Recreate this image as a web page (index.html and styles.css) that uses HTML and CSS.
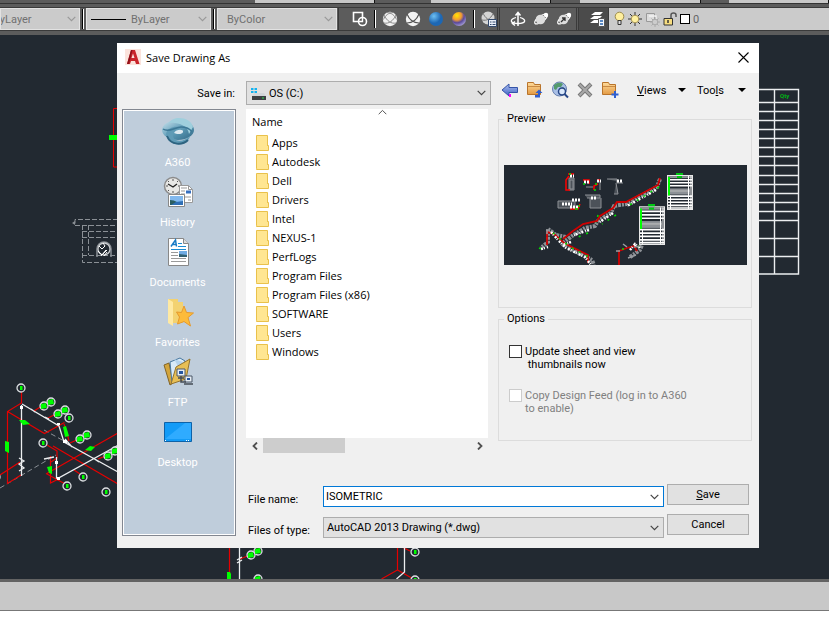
FILE: index.html
```html
<!DOCTYPE html>
<html lang="en">
<head>
    <meta charset="UTF-8">
    <meta name="viewport" content="width=device-width, initial-scale=1.0">
    <title>Save Drawing As</title>
    <link rel="stylesheet" href="styles.css">
</head>
<body>
    <!-- shared shapes -->
    <svg class="defs" width="0" height="0">
        <defs>
            <symbol id="chevron" viewBox="0 0 9 6"><path d="M.7 .8 4.5 4.6 8.3 .8" fill="none" stroke="currentColor" stroke-width="1.2"/></symbol>
            <symbol id="folder" viewBox="0 0 14 16">
                <path d="M.5 .5h11v14h-11z" fill="#ffe692" stroke="#e9c14b"/>
                <path d="M10.500 10.500h2v5h-12v-1" fill="#ffe692" stroke="#e9c14b"/>
                <path d="M1 1h10v13H1z" fill="#ffe692"/>
            </symbol>
            <symbol id="tag" viewBox="0 0 10 10"><circle cx="5" cy="5" r="4" fill="#222931" stroke="#dcdfe2" stroke-width="1.3"/><path d="M4 3h2.500v4H4z" fill="#00ff00"/></symbol>
            <symbol id="tagFull" viewBox="0 0 10 10"><circle cx="5" cy="5" r="4" fill="#222931" stroke="#dcdfe2" stroke-width="1.3"/><path d="M2 3l5-1 1 5-6 1z" fill="#00ff00"/></symbol>
            <symbol id="rows" viewBox="0 0 26 36" preserveAspectRatio="none">
                <path d="M.5 2.500h25v33h-25z" fill="none" stroke="#e8e8e8"/>
                <path d="M1 3h24v2H1z" fill="#8d9196"/>
                <path d="M3 15h20v6H3z" fill="#8d9196"/>
                <path d="M1 6.500h24M1 9.500h24M1 12.500h24M1 22.500h24M1 25.500h24M1 28.500h24M1 31.500h24M1 34h24" stroke="#fff" stroke-width="1.500"/>
                <path d="M3 17.500h20" stroke="#bbb"/>
                <path d="M3.500 22v13M21.500 3v32M24 3v32" stroke="#fff"/>
                <path d="M2 4v18" stroke="#00ff00" stroke-width="2"/>
                <path d="M9 0h7v2H9zM10 3h5v2h-5z" fill="#00c814"/>
            </symbol>
            <linearGradient id="blueGrad" x1="0" y1="0" x2="0" y2="1"><stop offset="0" stop-color="#aebff0"/><stop offset="1" stop-color="#3b62c4"/></linearGradient>
            <linearGradient id="orangeGrad" x1="0" y1="0" x2="0" y2="1"><stop offset="0" stop-color="#ffdc9c"/><stop offset="1" stop-color="#e39a44"/></linearGradient>
            <radialGradient id="ballBlue" cx=".35" cy=".3"><stop offset="0" stop-color="#6fc0f2"/><stop offset="1" stop-color="#1d67b4"/></radialGradient>
            <radialGradient id="ballGold" cx=".35" cy=".25" r=".8"><stop offset="0" stop-color="#ffe600"/><stop offset=".4" stop-color="#f09a35"/><stop offset=".65" stop-color="#5a4a9c"/><stop offset="1" stop-color="#a8a0d8"/></radialGradient>
            <linearGradient id="teal" x1="0" y1="0" x2="1" y2="1"><stop offset="0" stop-color="#cfe6f0"/><stop offset=".5" stop-color="#5f9db8"/><stop offset="1" stop-color="#2f6684"/></linearGradient>
        </defs>
    </svg>

    <header class="ribbon">
        <div class="ribbon-top">
            <span class="strip strip-a"></span>
            <span class="strip strip-b"></span>
            <span class="strip strip-c"></span>
            <span class="strip strip-d"></span>
        </div>
        <div class="toolbar">
            <div class="prop prop-color">
                <select aria-label="Object color"><option>ByLayer</option></select>
                <svg class="arrow" width="9" height="6"><use href="#chevron"/></svg>
            </div>
            <span class="divider"></span>
            <div class="prop prop-line">
                <span class="line-sample"></span>
                <select aria-label="Linetype"><option>ByLayer</option></select>
                <svg class="arrow" width="9" height="6"><use href="#chevron"/></svg>
            </div>
            <span class="divider"></span>
            <div class="prop prop-plot">
                <select aria-label="Plot style"><option>ByColor</option></select>
                <svg class="arrow" width="9" height="6"><use href="#chevron"/></svg>
            </div>
            <div class="panel panel-styles">
                <span class="grip"></span>
                <button aria-label="2D wireframe"><svg width="16" height="16" viewBox="0 0 16 16"><path d="M1.500 1.500h9v9h-9z" fill="none" stroke="#fff" stroke-width="1.600"/><circle cx="10.500" cy="10.500" r="4" fill="#5c5c5c" stroke="#fff" stroke-width="1.600"/><path d="M10.500 6v4.500H6" fill="none" stroke="#fff" stroke-width="1.400"/></svg></button>
                <span class="divider"></span>
                <button aria-label="Wireframe"><svg width="16" height="16" viewBox="0 0 16 16"><circle cx="8" cy="8" r="7.200" fill="#f0f0f0"/><path d="M2 4c3 6 7 9 12 8M14 4c-3 6-7 9-12 8M5 1.500c4 0 8 3 9.500 7M11 1.500c-4 0-8 3-9.500 7" fill="none" stroke="#8a8a8a"/></svg></button>
                <button aria-label="Hidden"><svg width="16" height="16" viewBox="0 0 16 16"><circle cx="8" cy="8" r="7.200" fill="#f4f4f4"/><path d="M2 3c2 5 6 9 12 9M14 3c-2 5-6 9-12 9" fill="none" stroke="#555" stroke-width="1.200"/></svg></button>
                <button aria-label="Realistic"><svg width="16" height="16" viewBox="0 0 16 16"><circle cx="8" cy="8" r="7" fill="url(#ballBlue)"/></svg></button>
                <button aria-label="Conceptual"><svg width="16" height="16" viewBox="0 0 16 16"><circle cx="8" cy="8" r="7" fill="url(#ballGold)"/></svg></button>
                <span class="divider"></span>
                <button aria-label="Manage visual styles"><svg width="16" height="16" viewBox="0 0 16 16"><circle cx="7" cy="7" r="6.500" fill="#d4d4d4"/><path d="M2 2c2 5 6 8 11 8M12 3c-3 5-6 7-11 6" fill="none" stroke="#777"/><path d="M7.500 8.500h8v7h-8z" fill="#e9eef8" stroke="#33496b"/><path d="M9 11h1.500M11.500 11h3M9 13.500h1.500M11.500 13.500h3" stroke="#33496b"/></svg></button>
            </div>
            <div class="panel panel-orbit">
                <span class="grip"></span>
                <button aria-label="Constrained orbit"><svg width="16" height="16" viewBox="0 0 16 16"><path d="M6 6.500c-7 2-6 6 2 6s9-4 2-6" fill="none" stroke="#fff" stroke-width="1.300"/><path d="M8 2v13M5.500 4.500 8 1.500l2.500 3M5 10.500l-2.500 2 2.500 2" fill="none" stroke="#fff" stroke-width="1.500"/></svg></button>
                <button aria-label="Free orbit"><svg width="16" height="16" viewBox="0 0 16 16"><ellipse cx="8" cy="8" rx="7.500" ry="3" transform="rotate(-35 8 8)" fill="none" stroke="#fff" stroke-width="1.200"/><circle cx="7.500" cy="8.500" r="4.800" fill="#ddd"/><circle cx="13" cy="4" r="2.200" fill="#fff"/></svg></button>
                <button aria-label="Continuous orbit"><svg width="16" height="16" viewBox="0 0 16 16"><ellipse cx="8" cy="8" rx="7.500" ry="3" transform="rotate(-35 8 8)" fill="none" stroke="#fff" stroke-width="1.200"/><circle cx="7.500" cy="8.500" r="4.800" fill="#ddd"/><path d="M5 11l4-4M6 7h3v3" fill="none" stroke="#333" stroke-width="1.300"/><circle cx="13" cy="4" r="2.200" fill="#fff"/></svg></button>
            </div>
            <div class="panel panel-layer">
                <span class="grip"></span>
                <button aria-label="Layer properties"><svg width="16" height="16" viewBox="0 0 16 16"><path d="M5 1h8l-3 3H1zM4 5h8l-3 3H0zM4 9h6v3H0z" fill="#fff"/><path d="M8.500 7.500h6v8h-6z" fill="#f4f7fb" stroke="#555"/><path d="M10 10h3M10 13h3" stroke="#2763ae" stroke-width="1.500"/></svg></button>
            </div>
            <div class="layer">
                <svg width="11" height="16" viewBox="0 0 11 16"><circle cx="5.500" cy="5.500" r="4.300" fill="#ffef9e" stroke="#9b8a4b"/><path d="M4 9.500h3v4H4z" fill="#ddd" stroke="#333"/></svg>
                <svg width="14" height="14" viewBox="0 0 14 14"><path d="M7 0v14M0 7h14M2 2l10 10M12 2 2 12" stroke="#333"/><circle cx="7" cy="7" r="3.800" fill="#fff1a0" stroke="#a79457"/></svg>
                <svg width="15" height="15" viewBox="0 0 15 15"><path d="M1.500 1.500h8v8h-8z" fill="#ddd" stroke="#999"/><path d="M4 4h7v4" fill="none" stroke="#f2f2f2" stroke-width="1.400"/><path d="M10 5v10M5 10h10M6.500 6.500l7 7M13.500 6.500l-7 7" stroke="#aaa"/><circle cx="10" cy="10" r="2.800" fill="#ccc" stroke="#aaa"/></svg>
                <svg width="14" height="14" viewBox="0 0 14 14"><path d="M8 7V3q0-2 2.500-2T13 3v2" fill="none" stroke="#555" stroke-width="1.500"/><path d="M1 6.500h8.500v6.500H1z" fill="#f7dd80" stroke="#333"/><path d="M5 8v3" stroke="#333" stroke-width="1.500"/></svg>
                <span class="swatch"></span>
                <span>0</span>
            </div>
        </div>
    </header>

    <main class="canvas">
        <svg class="drawing" viewBox="0 35 829 544" preserveAspectRatio="xMinYMin slice">
            <!-- parts list table -->
            <g fill="none" stroke="#eceef0" stroke-width="1.400">
                <path d="M740 89.500h58.500v184.500H740M774.500 89v185"/>
                <path d="M740 102.500h58M740 111.500h58M740 120.500h58M740 129.500h58M740 138.500h58M740 147.500h58M740 156.500h58M740 165.500h58M740 175.500h58M740 184.500h58M740 193.500h58M740 202.500h58M740 211.500h58M740 220.500h58M740 238.500h58M740 256.500h58"/>
            </g>
            <text x="780" y="98" class="cad-text">Qty</text>

            <!-- top left detail -->
            <path d="M118 108.500h-4.500v58.500h4" fill="none" stroke="#e60000"/>
            <path d="M109 135h8v5h-8z" fill="#00ff00"/>
            <g fill="none" stroke="#8b9096" stroke-dasharray="5 2">
                <path d="M118 219.500H75v6h43M82.500 225v37.500H118M88.500 225v30M82 231.500h36M82 237.500h36M82 255.500h36"/>
            </g>
            <path d="M72 223l3-2v4z" fill="#8b9096"/>
            <path d="M97 257v-8a7 7 0 0 1 14 0v8" fill="none" stroke="#8b9096" stroke-width="1.500"/>
            <circle cx="104" cy="249" r="6" fill="none" stroke="#c8cbce" stroke-width="1.300"/>
            <path d="M99 246l3 3 3-3-2-3M98 251l4 4 5-5M101 256l5-6M104 256l3-4" fill="none" stroke="#fff"/>

            <!-- left isometric -->
            <path d="M0 488l22-13 34-20M44 430l20 11" fill="none" stroke="#8b9096" stroke-dasharray="5 3"/>
            <g fill="none" stroke="#e60000" stroke-width="1.200">
                <path d="M21.500 391v12L7.500 411.500v72L21 475M7.500 411.500l37 22 20-11M0 475l20-13M53 446l65 38M46 474l72-41M50.500 456v27l8-4M47 474l20 11M47 445l10 6v7l-6 4M34 411l8-5M48 418l8-4M64 424l3 9 2 8M70 443l9-4M98 459l10-4M74 470l9 6"/>
            </g>
            <g fill="none" stroke="#eceef0" stroke-width="1.300">
                <path d="M21.500 405v71M22 404l37 22 5 16 54 30M56.500 457v21h2l60-33M44 459l10-2M19 458l5 3-5 3 5 4-5 3M31 409l4 3M45 417l4 2M93 458l6 4M65 439l7 8"/>
            </g>
            <path d="M5 441l4 1v11l-4-2zM19 420h6l5 4-7 1zM63 427l3-1 3 10-4 1zM47 467l5-1v8l-3-1zM85 450l5-4 5 1-4 4z" fill="#00ff00"/>
            <path d="M20 406h3v3h-3zM57 423h3v2h-3zM63 440h4v3h-4zM55 461h3v3h-3zM57 477h3v3h-3z" fill="#fff"/>
            <g>
                <use href="#tag" x="16" y="383" width="10" height="10"/>
                <use href="#tagFull" x="39" y="401" width="10" height="10"/>
                <use href="#tagFull" x="46" y="397" width="10" height="10"/>
                <use href="#tagFull" x="53" y="409" width="10" height="10"/>
                <use href="#tagFull" x="60" y="405" width="10" height="10"/>
                <use href="#tag" x="64" y="413" width="10" height="10"/>
                <use href="#tagFull" x="75" y="434" width="10" height="10"/>
                <use href="#tagFull" x="82" y="430" width="10" height="10"/>
                <use href="#tag" x="38" y="438" width="10" height="10"/>
                <use href="#tagFull" x="103" y="451" width="10" height="10"/>
                <use href="#tagFull" x="110" y="446" width="10" height="10"/>
                <use href="#tag" x="62" y="481" width="10" height="10"/>
                <use href="#tag" x="78" y="472" width="10" height="10"/>
                <use href="#tag" x="101" y="487" width="10" height="10"/>
                <use href="#tag" x="-9" y="472" width="10" height="10"/>
            </g>

            <!-- lower runs -->
            <path d="M229.500 540v35M240 559l10-4M397.500 540v30l-16 9M397.500 570l16 9M400 546l10 5" fill="none" stroke="#e60000" stroke-width="1.200"/>
            <path d="M239.500 540v39M404.500 540v32l-8 7M237 560l5-3M237 563l5-3" fill="none" stroke="#eceef0" stroke-width="1.300"/>
            <path d="M227 572h3l1 2v5h-4z" fill="#00ff00"/>
            <use href="#tagFull" x="246" y="550" width="10" height="10"/>
            <use href="#tagFull" x="253" y="546" width="10" height="10"/>
            <use href="#tagFull" x="253" y="574" width="10" height="10"/>
            <use href="#tag" x="410" y="547" width="10" height="10"/>
            <use href="#tag" x="410" y="575" width="10" height="10"/>
        </svg>

        <section class="dialog" role="dialog" aria-labelledby="dialog-title">
            <div class="titlebar">
                <svg width="16" height="16" viewBox="0 0 16 16"><path d="M0 0h16v16H0z" fill="#fbe3dc"/><path d="M2 15 6 1h4l4.500 14h-3.500l-1-3H6l-1 3z" fill="#c9242b"/><path d="M8 4.500 9.500 9h-3z" fill="#fbe3dc"/><path d="M2 15 6 1h1.500L4 15z" fill="#8e1219"/></svg>
                <h1 id="dialog-title">Save Drawing As</h1>
                <button class="close" aria-label="Close"><svg width="11" height="11" viewBox="0 0 11 11"><path d="M.5 .5l10 10M10.500 .5l-10 10" stroke="#000" stroke-width="1.100"/></svg></button>
            </div>

            <div class="content">
                <div class="lookin">
                    <label for="save-in">Save in:</label>
                    <div class="combo combo-drive">
                        <svg class="drive" width="15" height="13" viewBox="0 0 15 13"><path d="M0 1h2.500v2H0zM3.500 1H6v2H3.500zM0 4h2.500v2H0zM3.500 4H6v2H3.500z" fill="#12b3f0"/><path d="M3 6h10l2 3H1z" fill="#d3d6d9"/><path d="M1 9h14v4H1z" fill="#3d4043"/><path d="M11 10.500h2v1h-2z" fill="#2fe04d"/></svg>
                        <select id="save-in"><option>OS (C:)</option></select>
                        <svg class="arrow" width="9" height="6"><use href="#chevron"/></svg>
                    </div>
                    <div class="tools">
                        <button aria-label="Back"><svg width="18" height="18" viewBox="0 0 18 18"><path d="M1 9l7-6v3.500h8.500v5H8V15z" fill="url(#blueGrad)" stroke="#3554a8"/><path d="M8 13h2v3H8z" fill="#f0f"/></svg></button>
                        <button aria-label="Up one level"><svg width="18" height="18" viewBox="0 0 18 18"><path d="M1.500 13.500v-12h6l1 2h6v10z" fill="url(#orangeGrad)" stroke="#b9742b"/><path d="M2 5.500h12" stroke="#c98a45"/><path d="M9 16.500h5V12h2.500L13 8.500 9.500 12H12v2H9z" fill="#2f5fd0"/></svg></button>
                        <button aria-label="Search the Web"><svg width="18" height="18" viewBox="0 0 18 18"><circle cx="8.500" cy="8" r="7" fill="#a9bfe6" stroke="#667fae"/><path d="M3 4q5-4 9-1l-2 3-3 0-2 3-2-1zM9 8l3-2 2 2-2 3z" fill="#549a6c"/><circle cx="11" cy="10.500" r="3.500" fill="#dbe9fb" stroke="#274787" stroke-width="1.500"/><path d="M13.500 13l3.500 3.500" stroke="#274787" stroke-width="2"/></svg></button>
                        <button aria-label="Delete"><svg width="18" height="18" viewBox="0 0 18 18"><path d="M3 3l12 12M15 3 3 15" stroke="#777" stroke-width="4"/><path d="M3.500 3.500l11 11M14.500 3.500l-11 11" stroke="#a8a8a8" stroke-width="2"/></svg></button>
                        <button aria-label="Create new folder"><svg width="18" height="18" viewBox="0 0 18 18"><path d="M1.500 13.500v-12h6l1 2h6v10z" fill="url(#orangeGrad)" stroke="#b9742b"/><path d="M2 5.500h12" stroke="#c98a45"/><path d="M14 10v7M10.500 13.500h7" stroke="#2f5fd0" stroke-width="2"/></svg></button>
                    </div>
                    <button class="menu"><span><u>V</u>iews</span><i class="caret"></i></button>
                    <button class="menu"><span>Too<u>l</u>s</span><i class="caret"></i></button>
                </div>

                <div class="body">
                    <nav class="places">
                        <button>
                            <svg width="34" height="32" viewBox="0 0 34 32"><ellipse cx="17" cy="14" rx="16" ry="10" fill="url(#teal)"/><path d="M8 7c4-8 22-6 24 4l-4 7C27 9 16 6 8 7z" fill="#9fcfdd"/><path d="M5 18c2 14 22 13 24 2-7 7-18 6-17-2 1-5 8-6 11-3-2-6-16-6-18 3z" fill="#5f9bb6"/><path d="M6 20c4 10 16 9 21 4" stroke="#2d6380" stroke-width="2" fill="none"/><path d="M13 17c2-4 10-4 9-1s-7 2-9 1z" fill="#dbe8ef"/><path d="M2 13c6 4 12-2 18-2s9 2 11 5" fill="none" stroke="#3c7896" stroke-width="1.500"/></svg>
                            A360
                        </button>
                        <button>
                            <svg width="32" height="32" viewBox="0 0 32 32"><circle cx="11" cy="10" r="8.500" fill="#e8e8e6" stroke="#8b8b8b" stroke-width="1.500"/><path d="M11 3v2M11 15v2M4 10h2M16 10h2M6 5l1 1M16 5l-1 1M6 15l1-1" stroke="#555"/><path d="M6 8l5 3 4-3" fill="none" stroke="#222" stroke-width="1.300"/><path d="M17.500 9.500h9l4 4v13h-13z" fill="#fff" stroke="#999"/><path d="M26.500 9.500v4h4M19 12h6M19 15h4M19 18h4M19 21h10M26 24h3" fill="none" stroke="#999"/><path d="M24 14.500h5v3h-5z" fill="#356fc0"/><path d="M6.500 18.500h16v12h-16z" fill="#fff" stroke="#888"/><path d="M8 20h13v9H8z" fill="#82b9ee"/><path d="M8 24q4 0 7 2h6v3H8z" fill="#2b5e61"/><path d="M14 26l7-1v4H9z" fill="#2f6fb5"/></svg>
                            History
                        </button>
                        <button>
                            <svg width="32" height="32" viewBox="0 0 32 32"><path d="M6.500 2.500h15l5 5v22h-20z" fill="#fff" stroke="#888"/><path d="M21.500 2.500v5h5" fill="#ddd" stroke="#888"/><path d="M9 10.500 13.500 4l1 6.500M11 8.500h3" stroke="#187bc5" stroke-width="1.500" fill="none"/><path d="M16 7.500h4M16 10.500h8M9 13.500h15" stroke="#1b8bd2"/><path d="M9 16.500h7M9 19.500h7M9 22.500h15M9 25.500h15" stroke="#9a9a9a"/><path d="M17 15h8v6h-8z" fill="#70abe3"/><path d="M17 18l8 1v2h-8z" fill="#315f70"/></svg>
                            Documents
                        </button>
                        <button>
                            <svg width="32" height="32" viewBox="0 0 32 32"><path d="M6 3h10v3h5v21H6z" fill="#f3d271"/><path d="M6 3l5 3v24l-5-3z" fill="#ffe9a2"/><path d="M22 10l2.500 6.500 7 .5-5.500 4.500 2.500 8.500-6.500-4.500L15.500 28l2-7-3-5 5 .5z" fill="#fdbb3a" stroke="#e59a2e"/></svg>
                            Favorites
                        </button>
                        <button>
                            <svg width="32" height="32" viewBox="0 0 32 32"><path d="M2 9l5-2 4 20-3 2z" fill="#d3a53d" stroke="#826427"/><path d="M8 6l10-4 5 3-3 18-10 4z" fill="#d8eaf8" stroke="#48779e"/><path d="M12 3l9 3-3 8z" fill="#b4d3ed"/><path d="M9 28l5-17 14-8-4 20z" fill="#e7bf55" stroke="#94732e"/><path d="M15 13h8v7h-8zM23 20h7v6h-7z" fill="#e6edf4" stroke="#4b5666"/><path d="M17 15h4v3h-4zM25 22h3v2h-3z" fill="#2455a0"/><path d="M19 20v6h5M16 22h6M22 28h9" fill="none" stroke="#454c55" stroke-width="1.500"/></svg>
                            FTP
                        </button>
                        <button>
                            <svg width="32" height="32" viewBox="0 0 32 32"><path d="M2.500 6.500h27v19h-27z" fill="#129bf7" stroke="#0d62a8"/><path d="M3 23 23 7h6v16z" fill="#2fabff"/><path d="M3 24.500h2M24 24.500h4" stroke="#fff" stroke-dasharray="1 1"/></svg>
                            Desktop
                        </button>
                    </nav>

                    <div class="files-area">
                        <div class="upper">
                            <div class="browser">
                                <div class="list">
                                    <button class="column-head">
                                        <svg class="sort" width="9" height="6" viewBox="0 0 9 6"><path d="M.7 5.200 4.500 1.400l3.800 3.800" fill="none" stroke="#555"/></svg>
                                        Name
                                    </button>
                                    <ul>
                                        <li><svg width="14" height="16"><use href="#folder"/></svg>Apps</li>
                                        <li><svg width="14" height="16"><use href="#folder"/></svg>Autodesk</li>
                                        <li><svg width="14" height="16"><use href="#folder"/></svg>Dell</li>
                                        <li><svg width="14" height="16"><use href="#folder"/></svg>Drivers</li>
                                        <li><svg width="14" height="16"><use href="#folder"/></svg>Intel</li>
                                        <li><svg width="14" height="16"><use href="#folder"/></svg>NEXUS-1</li>
                                        <li><svg width="14" height="16"><use href="#folder"/></svg>PerfLogs</li>
                                        <li><svg width="14" height="16"><use href="#folder"/></svg>Program Files</li>
                                        <li><svg width="14" height="16"><use href="#folder"/></svg>Program Files (x86)</li>
                                        <li><svg width="14" height="16"><use href="#folder"/></svg>SOFTWARE</li>
                                        <li><svg width="14" height="16"><use href="#folder"/></svg>Users</li>
                                        <li><svg width="14" height="16"><use href="#folder"/></svg>Windows</li>
                                    </ul>
                                </div>
                                <div class="scrollbar">
                                    <button aria-label="Scroll left"><svg width="6" height="8" viewBox="0 0 6 8"><path d="M5 .5 1.500 4 5 7.500" fill="none" stroke="#505050" stroke-width="1.800"/></svg></button>
                                    <div class="track"><div class="thumb"></div></div>
                                    <button aria-label="Scroll right"><svg width="6" height="8" viewBox="0 0 6 8"><path d="M1 .5 4.500 4 1 7.500" fill="none" stroke="#505050" stroke-width="1.800"/></svg></button>
                                </div>
                            </div>

                            <div class="side">
                                <fieldset class="preview">
                                    <legend>Preview</legend>
                                    <svg viewBox="0 0 243 100">
                                        <path d="M0 0h243v100H0z" fill="#222931"/>
                                        <use href="#rows" x="163" y="8" width="26" height="37"/>
                                        <use href="#rows" x="135" y="39" width="26" height="41"/>
                                        <!-- small details -->
                                        <path d="M65 13h5v12h-5zM66 15h3v9h-3zM82 22h7M96 25v-9M103 14h10v4h6M112 18l2 11h-4M54 36h17v7H54zM81 30h15v3H83M86 33v10h11V33" fill="#4c5259" stroke="#8d9196"/>
                                        <path d="M64 9h6M65 11l-3 4v10h4M79 15h6v4M93 15h3M94 19l-4 2v4M66 44h8l2-5" fill="none" stroke="#f00" stroke-width="1.500"/>
                                        <path d="M66 11h4M80 17h5M93 16h4M113 16h5M58 39h10M68 35h8M66 42h8M87 33h5" stroke="#fff" stroke-width="3" stroke-dasharray="2 1"/>
                                        <path d="M66 8v2M79 19h2M92 18v2M90 25h2M75 40v2M71 44h3" stroke="#00e000" stroke-width="1.500"/>
                                        <!-- pipe runs -->
                                        <g fill="none">
                                            <path d="M156 14l-3 8-31 17-12 2-3 7-13 8-3 5-10 2-13 8-9 7M62 72l-10-2-8-6v13l-7 6M58 79l22 12 8 4 2 5M126 92l10-7 2-5" stroke="#8d9196" stroke-width="4" stroke-dasharray="3 1 2 1"/>
                                            <path d="M156 13l-2 7-32 17h-9l-4 6-13 8-3 5-14 3-10 7-10 8M43 80V67l7 2 10 9 24 12v8M115 100V86l8-3 7-2 3 5" stroke="#d00000" stroke-width="1.800"/>
                                            <path d="M152 25l-29 16M109 48l-13 9M85 65l-15 5M67 77l-8 3M47 67l8 9 7 7 19 9 6 8M37 84l7-2M126 85l5-6 5 4" stroke="#fff" stroke-width="2.500" stroke-dasharray="2 1 1 2"/>
                                            <path d="M155 22l-31 19M112 50l-14 9M94 50l-2 8M84 68l-15 6M49 68l17 14 19 10M35 83l5 2M118 84h4M134 82l3-3" stroke="#00e000" stroke-width="1.500" stroke-dasharray="2 6"/>
                                            <path d="M43 64v5M116 86h-4M119 79l4 3M132 90l-8 3M130 82l7-1" stroke="#999da1" stroke-width="1.500"/>
                                        </g>
                                    </svg>
                                </fieldset>
                                <fieldset class="options">
                                    <legend>Options</legend>
                                    <label><input type="checkbox"><span>Update sheet and view<br>&nbsp;thumbnails now</span></label>
                                    <label class="disabled"><input type="checkbox" disabled><span>Copy Design Feed (log in to A360<br>to enable)</span></label>
                                </fieldset>
                            </div>
                        </div>

                        <form class="lower">
                            <div class="fields">
                                <label for="file-name">File name:</label>
                                <div class="combo combo-name">
                                    <input type="text" id="file-name" value="ISOMETRIC">
                                    <svg class="arrow" width="9" height="6"><use href="#chevron"/></svg>
                                </div>
                                <label for="file-type">Files of type:</label>
                                <div class="combo">
                                    <select id="file-type"><option>AutoCAD 2013 Drawing (*.dwg)</option></select>
                                    <svg class="arrow" width="9" height="6"><use href="#chevron"/></svg>
                                </div>
                            </div>
                            <div class="actions">
                                <button type="button"><u>S</u>ave</button>
                                <button type="button">Cancel</button>
                            </div>
                        </form>
                    </div>
                </div>
            </div>
        </section>
    </main>

    <footer class="status"></footer>
</body>
</html>
```

FILE: styles.css
```css
* {
    box-sizing: border-box;
}
body {
    margin: 0;
    background-color: #fff;
    color: #000;
    font-family: Roboto, "Liberation Sans", Arial, sans-serif;
    font-size: 11px;
    line-height: 13px;
}
button, select, input {
    font: inherit;
    color: inherit;
    margin: 0;
    padding: 0;
    border: none;
    border-radius: 0;
    background: none;
}
select, input {
    appearance: none;
    width: 100%;
    outline: none;
}
svg {
    display: block;
    flex: none;
}
.defs {
    position: absolute;
}

/* toolbar */
.ribbon {
    background-color: #5c5c5c;
    padding-bottom: 4px;
}
.ribbon-top {
    display: flex;
    height: 4px;
    border-bottom: 1px solid #333;
    margin-bottom: 3px;
}
.strip {
    background-color: #c8c8c8;
    border-right: 1px solid #111;
}
.strip-a {
    width: 120px;
    margin-left: 255px;
}
.strip-b {
    width: 120px;
    margin-left: 56px;
}
.strip-c {
    width: 121px;
    margin-left: 29px;
}
.strip-d {
    flex: 1;
    margin-left: 28px;
}
.toolbar {
    display: flex;
    height: 24px;
    border-top: 1px solid #3a3a3a;
    border-bottom: 1px solid #3a3a3a;
}
.prop {
    position: relative;
    display: flex;
    align-items: center;
    background-color: #cbcbcb;
    border: 1px solid #e2e2e2;
    color: #707070;
}
.prop-color {
    width: 80px;
    overflow: hidden;
}
.prop-color select {
    margin-left: -8px;
}
.prop-line {
    width: 125px;
    padding-left: 4px;
}
.prop-plot {
    width: 120px;
    padding-left: 9px;
}
.prop .arrow {
    right: 3px;
    color: #999;
}
.line-sample {
    flex: none;
    width: 35px;
    height: 1px;
    margin-right: 5px;
    background-color: #000;
}
.divider {
    width: 2px;
    margin: 1px 2px;
    background-color: #fff;
    border-left: 1px solid #000;
}
.panel {
    display: flex;
    align-items: center;
    border: 1px solid #3a3a3a;
    border-width: 0 1px;
    margin-left: 1px;
}
.panel-styles {
    width: 160px;
    gap: 4px;
}
.panel-styles .grip {
    margin-right: 2px;
}
.panel-styles .divider {
    height: 18px;
    margin: 0 2px;
}
.panel-styles button:nth-of-type(n+2):nth-of-type(-n+4) {
    margin-right: 3px;
}
.panel-orbit {
    width: 78px;
    gap: 7px;
}
.panel-orbit .grip {
    margin-right: -4px;
}
.panel-layer {
    width: 31px;
    gap: 4px;
    background-color: #4b4b4b;
}
.grip {
    width: 5px;
    height: 14px;
    margin-left: 2px;
    background-image: radial-gradient(#222 40%, transparent 50%);
    background-size: 2px 2px;
}
.layer {
    flex: 1;
    display: flex;
    align-items: center;
    gap: 3px;
    padding-left: 5px;
    background-color: #cbcbcb;
    color: #666;
}
.swatch {
    width: 10px;
    height: 10px;
    background-color: #fff;
    border: 1px solid #000;
}

/* model space */
.canvas {
    position: relative;
    padding: 8px 70px 31px 117px;
    background-color: #222931;
}
.drawing {
    position: absolute;
    top: 0;
    left: 0;
    width: 100%;
    height: 100%;
}
.cad-text {
    fill: #00b414;
    font-size: 6px;
    font-weight: bold;
}
.status {
    height: 32px;
    background-color: #c8c8c8;
    border-top: 3px solid #636363;
    border-bottom: 1px solid #777;
}

/* dialog */
.dialog {
    position: relative;
    background-color: #f0f0f0;
}
.titlebar {
    display: flex;
    align-items: center;
    gap: 5px;
    height: 30px;
    padding: 0 10px 2px 8px;
    background-color: #fff;
}
.titlebar h1 {
    margin: 0;
    font-family: "Open Sans", "Noto Sans", sans-serif;
    font-size: 11px;
    font-weight: normal;
}
.close {
    margin-left: auto;
}
.content {
    padding: 8px 7px 10px 5px;
}
.lookin {
    display: flex;
    align-items: center;
    height: 24px;
}
.lookin label {
    width: 113px;
    margin-right: 11px;
    text-align: right;
}
.combo {
    position: relative;
    display: flex;
    align-items: center;
    height: 21px;
    padding-left: 3px;
    background-color: #e1e1e1;
    border: 1px solid #adadad;
}
.combo-name {
    padding-left: 2px;
    background-color: #fff;
    border-color: #0078d7;
}
.combo-drive {
    flex: 1;
    height: 24px;
    padding-left: 4px;
    gap: 3px;
}
.arrow {
    position: absolute;
    right: 4px;
    color: #444;
    pointer-events: none;
}
.tools {
    display: flex;
    gap: 7px;
    margin: 0 0 6px 10px;
}
.menu {
    display: flex;
    align-items: center;
    justify-content: space-between;
    width: 49px;
    margin: 0 0 6px 18px;
}
.menu + .menu {
    margin-left: 11px;
    margin-right: 6px;
}
.caret {
    border: 4px solid transparent;
    border-top-color: #000;
    border-bottom: none;
}
.body {
    display: flex;
    gap: 10px;
    margin-top: 4px;
}
.places {
    flex: none;
    display: flex;
    flex-direction: column;
    width: 114px;
    padding: 6px 3px 0 0;
    margin-bottom: 2px;
    background-color: #bfcddb;
    border: 1px solid #828790;
    outline: 1px solid #fff;
    outline-offset: -2px;
}
.places button {
    display: flex;
    flex-direction: column;
    align-items: center;
    gap: 8px;
    height: 60px;
    color: #fff;
}
.files-area {
    flex: 1;
}
.upper {
    display: flex;
    gap: 10px;
}
.browser {
    flex: 1;
}
.list {
    min-height: 329px;
    background-color: #fff;
    font-family: "Open Sans", "Noto Sans", sans-serif;
}
.column-head {
    position: relative;
    display: block;
    width: 100%;
    height: 24px;
    padding-left: 6px;
    text-align: left;
}
.sort {
    position: absolute;
    top: 0;
    right: 101px;
}
.list ul {
    margin: 0;
    padding: 0 0 0 10px;
    list-style: none;
}
.list li {
    display: flex;
    align-items: center;
    gap: 2px;
    height: 19px;
}
.scrollbar {
    display: flex;
    height: 15px;
}
.scrollbar button {
    display: flex;
    align-items: center;
    justify-content: center;
    width: 17px;
}
.track {
    flex: 1;
}
.thumb {
    width: 82px;
    height: 15px;
    background-color: #cdcdcd;
}
.side {
    width: 254px;
    padding-top: 3px;
}
fieldset {
    margin: 0 0 4px;
    border: 1px solid #dcdcdc;
}
legend {
    padding: 0 3px;
    line-height: 14px;
}
.preview {
    padding: 39px 4px 42px 5px;
}
.preview svg {
    width: 100%;
}
.options {
    padding: 19px 5px 25px;
}
.options label {
    display: flex;
    gap: 3px;
    padding-left: 5px;
}
.options label + label {
    margin-top: 18px;
}
.options input {
    flex: none;
    width: 13px;
    height: 13px;
    background-color: #fff;
    border: 1px solid #333;
}
.options .disabled {
    color: #808080;
}
.options .disabled input {
    border-color: #ccc;
}
.lower {
    display: flex;
    gap: 3px;
    padding: 31px 3px 0 2px;
}
.fields {
    flex: 1;
    display: grid;
    grid-template-columns: 75px 1fr;
    row-gap: 10px;
    padding-top: 2px;
}
.fields label {
    padding-top: 7px;
}
.actions {
    display: flex;
    flex-direction: column;
    gap: 9px;
    width: 82px;
}
.actions button {
    height: 21px;
    background-color: #e1e1e1;
    border: 1px solid #adadad;
}
```
